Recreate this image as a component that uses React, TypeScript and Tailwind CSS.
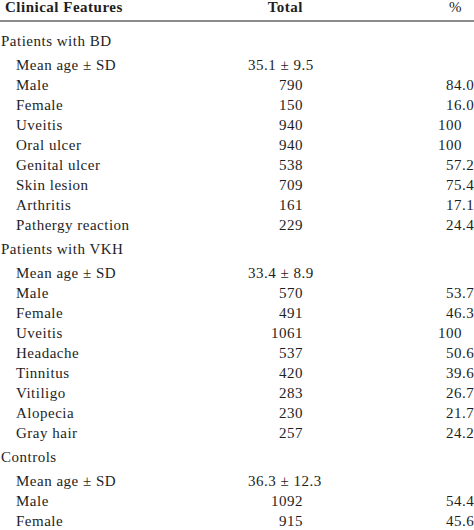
const sections = [
  {
    title: 'Patients with BD',
    mean: '35.1 ± 9.5',
    rows: [
      ['Male', '790', '84', '.0'],
      ['Female', '150', '16', '.0'],
      ['Uveitis', '940', '100', ''],
      ['Oral ulcer', '940', '100', ''],
      ['Genital ulcer', '538', '57', '.2'],
      ['Skin lesion', '709', '75', '.4'],
      ['Arthritis', '161', '17', '.1'],
      ['Pathergy reaction', '229', '24', '.4'],
    ],
  },
  {
    title: 'Patients with VKH',
    mean: '33.4 ± 8.9',
    rows: [
      ['Male', '570', '53', '.7'],
      ['Female', '491', '46', '.3'],
      ['Uveitis', '1061', '100', ''],
      ['Headache', '537', '50', '.6'],
      ['Tinnitus', '420', '39', '.6'],
      ['Vitiligo', '283', '26', '.7'],
      ['Alopecia', '230', '21', '.7'],
      ['Gray hair', '257', '24', '.2'],
    ],
  },
  {
    title: 'Controls',
    mean: '36.3 ± 12.3',
    rows: [
      ['Male', '1092', '54', '.4'],
      ['Female', '915', '45', '.6'],
    ],
  },
];

// percent column is aligned on the decimal point
function Row({ label, total, whole, frac }: { label: string; total: string; whole: string; frac: string }) {
  return (
    <div className="flex h-[20px] items-center leading-[20px]">
      <div className="w-[248px] shrink-0 pl-[16px]">{label}</div>
      <div className="w-[55px] shrink-0 text-right">{total}</div>
      <div className="ml-[134px] w-[25px] shrink-0 text-right">{whole}</div>
      <div className="whitespace-nowrap">{frac}</div>
    </div>
  );
}

export default function App() {
  return (
    <div className="h-[530px] w-[474px] overflow-hidden bg-white font-['Liberation_Serif','Times_New_Roman',serif] text-[15px] tracking-[0.5px] text-[#1e1e1e]">
      {/* header */}
      <div className="flex h-[22px] items-start border-b-2 border-[#8c8c8c] font-bold leading-[14px]">
        <div className="w-[248px] shrink-0 pl-[5px]">Clinical Features</div>
        <div className="w-[55px] shrink-0 text-right">Total</div>
        <div className="ml-[134px] w-[25px] shrink-0 text-right font-normal">%</div>
      </div>

      <div className="mt-[9px] flex flex-col gap-[4px]">
        {sections.map((s) => (
          <div key={s.title}>
            <div className="h-[20px] pl-[1px] leading-[20px]">{s.title}</div>
            <div className="mt-[4px]">
              <div className="flex h-[20px] items-center leading-[20px]">
                <div className="w-[248px] shrink-0 pl-[16px]">Mean age ± SD</div>
                <div className="whitespace-nowrap">{s.mean}</div>
              </div>
              {s.rows.map(([l, t, w, f]) => (
                <Row key={l} label={l} total={t} whole={w} frac={f} />
              ))}
            </div>
          </div>
        ))}
      </div>
    </div>
  );
}
